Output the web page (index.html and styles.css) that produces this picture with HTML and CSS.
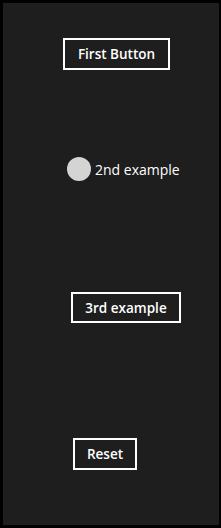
FILE: index.html
```html
<!DOCTYPE html>
<html lang="en">
<head>
    <meta charset="UTF-8">
    <title>Buttons</title>
    <link rel="stylesheet" href="styles.css">
</head>
<body>
    <div class="panel">
        <button class="btn first">First Button</button>
        <div class="radio-row">
            <span class="dot"></span>
            <span class="label">2nd example</span>
        </div>
        <button class="btn third">3rd example</button>
        <button class="btn reset">Reset</button>
    </div>
</body>
</html>
```

FILE: styles.css
```css
* {
    margin: 0;
    padding: 0;
    box-sizing: border-box;
}

html, body {
    height: 100%;
}

body {
    background: #000;
    padding: 3px 2px 3px 3px;
    font-family: "Open Sans", "Noto Sans", sans-serif;
    color: #fff;
}

.panel {
    height: 100%;
    background: #1e1e1e;
    display: flex;
    flex-direction: column;
    align-items: flex-start;
}

.btn {
    background: transparent;
    border: 2px solid #fff;
    color: #fff;
    font-family: inherit;
    font-size: 13.5px;
    font-weight: 600;
    display: flex;
    align-items: center;
    justify-content: center;
}

.first {
    margin: 35px 0 0 60px;
    width: 107px;
    height: 32px;
}

.radio-row {
    margin: 87px 0 0 64px;
    display: flex;
    align-items: center;
    gap: 4px;
}

.dot {
    width: 24px;
    height: 24px;
    border-radius: 50%;
    background: #d4d4d4;
}

.label {
    font-size: 14px;
}

.third {
    margin: 111px 0 0 68px;
    width: 110px;
    height: 31px;
}

.reset {
    margin: 115px 0 0 70px;
    width: 64px;
    height: 32px;
}
```
